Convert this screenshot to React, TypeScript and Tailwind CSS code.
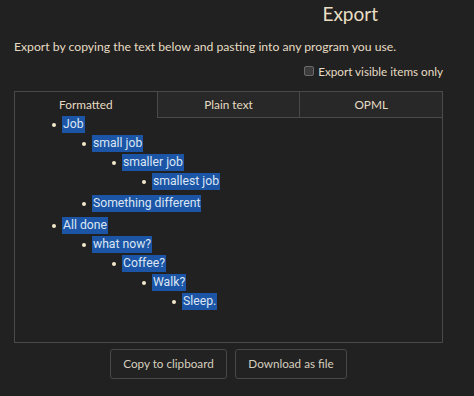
import React, { useState } from 'react';

type Item = { text: string; level: number; gap?: boolean };

const items: Item[] = [
  { text: 'Job', level: 0 },
  { text: 'small job', level: 1 },
  { text: 'smaller job', level: 2 },
  { text: 'smallest job', level: 3 },
  { text: 'Something different', level: 1, gap: true },
  { text: 'All done', level: 0, gap: true },
  { text: 'what now?', level: 1 },
  { text: 'Coffee?', level: 2 },
  { text: 'Walk?', level: 3 },
  { text: 'Sleep.', level: 4 },
];

const indent = ['pl-[37px]', 'pl-[67px]', 'pl-[97px]', 'pl-[127px]', 'pl-[157px]'];

const tabs = ['Formatted', 'Plain text', 'OPML'];

export default function App() {
  const [activeTab, setActiveTab] = useState('Formatted');
  const [visibleOnly, setVisibleOnly] = useState(false);

  return (
    <div className="w-[474px] h-[396px] bg-[#212121] text-[#e6dcc4] font-['Lato',sans-serif] overflow-hidden">
      <div className="flex justify-end pr-[96px] h-[30px]">
        <h1 className="text-[19px] leading-[28px] text-[#eadfc3]">Export</h1>
      </div>

      <p className="ml-[14px] mt-[8px] text-[12.2px] leading-[18px]">
        Export by copying the text below and pasting into any program you use.
      </p>

      <div className="w-[429px] ml-[14px] mt-[6px] flex justify-end">
        <label className="flex items-center gap-[4px] text-[11.7px] leading-[18px] cursor-pointer">
          <span
            onClick={() => setVisibleOnly(!visibleOnly)}
            className="w-[10px] h-[10px] rounded-[2px] border border-[#6a6a6a] bg-[#3c3c3c]"
          />
          Export visible items only
        </label>
      </div>

      <div className="w-[429px] h-[252px] ml-[14px] mt-[11px] border border-[#4a4a4a] flex flex-col">
        <div className="flex h-[26px] shrink-0">
          {tabs.map((t, i) => (
            <button
              key={t}
              onClick={() => setActiveTab(t)}
              className={`flex-1 text-[11.8px] leading-[24px] text-[#e6dcc4] ${
                activeTab === t
                  ? 'bg-[#212121]'
                  : `bg-[#282828] border-b border-[#4a4a4a] ${i > 0 ? 'border-l' : ''}`
              }`}
            >
              {t}
            </button>
          ))}
        </div>

        <ul className="-mt-[3px] font-['Roboto',sans-serif] text-[12.2px]">
          {items.map((it, i) => (
            <li
              key={i}
              className={`flex items-center h-[19px] ${indent[it.level]} ${it.gap ? 'mt-[3px]' : ''}`}
            >
              <span className="w-[4px] h-[4px] rounded-full bg-[#f2e8cc] mr-[6px]" />
              <span className="bg-[#1c55a5] text-[#dbe5f4] leading-[17px] px-[1px]">{it.text}</span>
            </li>
          ))}
        </ul>
      </div>

      <div className="w-[429px] ml-[14px] mt-[6px] flex justify-center gap-[8px]">
        <button className="w-[117px] h-[30px] border border-[#484848] rounded-[3px] bg-[#222222] text-[11.7px] text-[#d6cfbf]">
          Copy to clipboard
        </button>
        <button className="w-[112px] h-[30px] border border-[#484848] rounded-[3px] bg-[#222222] text-[11.7px] text-[#d6cfbf]">
          Download as file
        </button>
      </div>
    </div>
  );
}
